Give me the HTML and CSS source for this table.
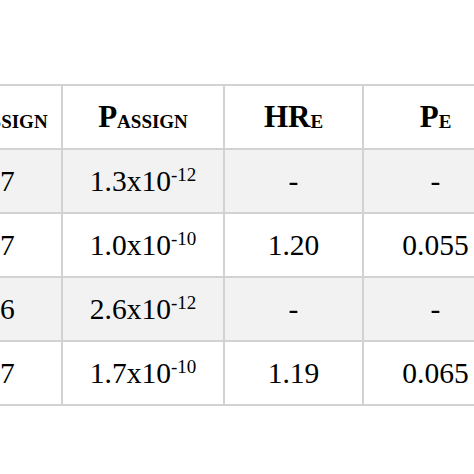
FILE: index.html
```html
<!DOCTYPE html>
<html>
<head>
<meta charset="utf-8">
<link rel="stylesheet" href="styles.css">
</head>
<body>
<table class="results">
  <colgroup>
    <col class="c1"><col class="c2"><col class="c3"><col class="c4">
  </colgroup>
  <thead>
    <tr>
      <th>HR<span class="sub">ASSIGN</span></th>
      <th>P<span class="sub">ASSIGN</span></th>
      <th>HR<span class="sub">E</span></th>
      <th>P<span class="sub">E</span></th>
    </tr>
  </thead>
  <tbody>
    <tr class="alt">
      <td>1.17</td>
      <td>1.3x10<sup>-12</sup></td>
      <td>-</td>
      <td>-</td>
    </tr>
    <tr>
      <td>1.17</td>
      <td>1.0x10<sup>-10</sup></td>
      <td>1.20</td>
      <td>0.055</td>
    </tr>
    <tr class="alt">
      <td>1.16</td>
      <td>2.6x10<sup>-12</sup></td>
      <td>-</td>
      <td>-</td>
    </tr>
    <tr>
      <td>1.17</td>
      <td>1.7x10<sup>-10</sup></td>
      <td>1.19</td>
      <td>0.065</td>
    </tr>
  </tbody>
</table>
</body>
</html>
```

FILE: styles.css
```css
html, body {
  margin: 0;
  padding: 0;
  background: #ffffff;
  overflow: hidden;
}
body {
  width: 474px;
  height: 474px;
}
.results {
  border-collapse: collapse;
  table-layout: fixed;
  width: 592px;
  margin-top: 84px;
  margin-left: -85px;
  font-family: "Liberation Serif", "Times New Roman", serif;
  color: #000000;
}
.c1 { width: 146px; }
.c2 { width: 162px; }
.c3 { width: 139px; }
.c4 { width: 145px; }
.results th,
.results td {
  border: 2px solid #d2d2d2;
  height: 62px;
  padding: 0;
  text-align: center;
  vertical-align: middle;
  white-space: nowrap;
}
.results th {
  font-weight: bold;
  font-size: 31px;
  background: #ffffff;
}
.results td {
  font-size: 29.5px;
  font-weight: normal;
}
.results tr.alt td {
  background: #f2f2f2;
}
.sub {
  font-size: 19px;
  vertical-align: -1px;
}
sup {
  font-size: 19px;
  vertical-align: 10px;
  line-height: 0;
}
```
